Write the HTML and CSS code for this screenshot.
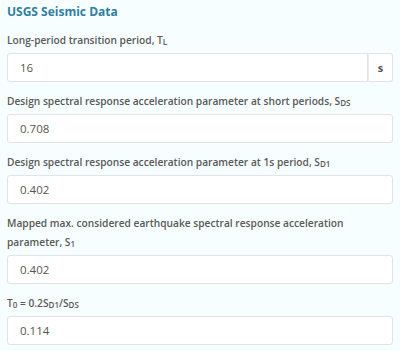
FILE: index.html
```html
<!DOCTYPE html>
<html lang="en">
<head>
    <meta charset="UTF-8">
    <meta name="viewport" content="width=device-width, initial-scale=1.0">
    <title>USGS Seismic Data</title>
    <link rel="stylesheet" href="styles.css">
</head>
<body>
    <div class="panel">
        <h3 class="title">USGS Seismic Data</h3>

        <div class="field">
            <label class="lbl">Long-period transition period, T<sub>L</sub></label>
            <div class="inputGroup">
                <input class="inp" type="text" value="16">
                <span class="addon">s</span>
            </div>
        </div>

        <div class="field">
            <label class="lbl">Design spectral response acceleration parameter at short periods, S<sub>DS</sub></label>
            <input class="inp" type="text" value="0.708">
        </div>

        <div class="field">
            <label class="lbl">Design spectral response acceleration parameter at 1s period, S<sub>D1</sub></label>
            <input class="inp" type="text" value="0.402">
        </div>

        <div class="field">
            <label class="lbl">Mapped max. considered earthquake spectral response acceleration parameter, S<sub>1</sub></label>
            <input class="inp" type="text" value="0.402">
        </div>

        <div class="field">
            <label class="lbl">T<sub>0</sub> = 0.2S<sub>D1</sub>/S<sub>DS</sub></label>
            <input class="inp" type="text" value="0.114">
        </div>
    </div>
</body>
</html>
```

FILE: styles.css
```css
*{
    box-sizing: border-box;
}
html, body {
    margin: 0;
    background-color: #f7feff;
    font-family: "Open Sans", "Noto Sans", sans-serif;
    color: #555;
}
.panel {
    padding: 2px 7px 0 7px;
}
.title {
    margin: 0 0 9px 0;
    font-size: 12px;
    font-weight: 700;
    color: #2f7fa1;
    line-height: 20px;
}
.field {
    margin-bottom: 10px;
}
.lbl {
    display: block;
    width: 360px;
    font-size: 10.2px;
    font-weight: 600;
    line-height: 19px;
    color: #595959;
    margin-bottom: 3px;
}
.lbl sub {
    font-size: 8px;
    line-height: 0;
    vertical-align: -1px;
}
.inp {
    display: block;
    width: 100%;
    height: 29px;
    padding: 0 12px;
    border: 1px solid #e3e3e3;
    border-radius: 3px;
    background-color: #fff;
    font-family: inherit;
    font-size: 11.5px;
    color: #555;
    outline: none;
}
.inputGroup {
    display: flex;
}
.inputGroup .inp {
    flex: 1;
    border-radius: 3px 0 0 3px;
}
.addon {
    width: 25px;
    height: 29px;
    display: flex;
    align-items: center;
    justify-content: center;
    border: 1px solid #e3e3e3;
    border-left: 1px solid #ececec;
    border-radius: 0 3px 3px 0;
    background-color: #fff;
    font-size: 11px;
    font-weight: 700;
    color: #555;
}
```
